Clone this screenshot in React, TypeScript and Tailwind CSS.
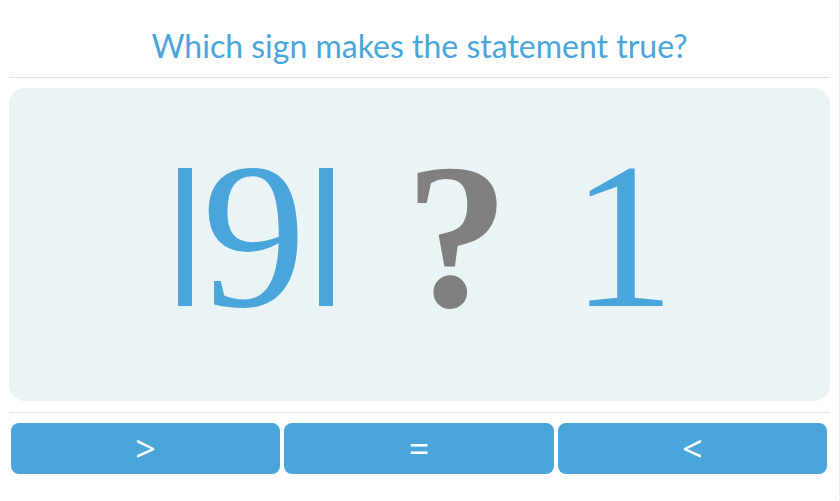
import React from 'react';

const options = ['>', '=', '<'];

export default function App() {
  return (
    <div className="w-[840px] h-[501px] bg-white border-r border-dotted border-[#e3e3e3] font-[Lato,sans-serif]">
      {/* Question */}
      <div className="h-[77px] pt-[14px] flex items-center justify-center">
        <h1 className="text-[32px] text-[#4aa6da] leading-none">Which sign makes the statement true?</h1>
      </div>
      <div className="mx-[9px] h-px bg-[#e2e2e2]" />

      {/* Statement */}
      <div className="mx-[9px] mt-[10px] h-[313px] rounded-[16px] bg-[#eaf4f7] flex items-center justify-center pb-[18px] pl-[14px]">
        <div className="flex items-baseline font-[Liberation_Serif,serif] text-[208px] leading-none">
          <span className="inline-block w-[14px] h-[138px] bg-[#4aa6da]" />
          <span className="ml-[10px] text-[#4aa6da]">9</span>
          <span className="ml-[13px] inline-block w-[14px] h-[138px] bg-[#4aa6da]" />
          <span className="ml-[72px] text-[#808080] font-bold">?</span>
          <span className="ml-[62px] text-[#4aa6da]">1</span>
        </div>
      </div>
      <div className="mx-[9px] mt-[11px] h-px bg-[#e2e2e2]" />

      {/* Answers */}
      <div className="ml-[11px] w-[816px] mt-[10px] grid grid-cols-3 gap-[4px]">
        {options.map((o) => (
          <button
            key={o}
            className="h-[51px] rounded-[8px] bg-[#4aa6da] text-white font-[Open_Sans,sans-serif] text-[36px] leading-none flex items-center justify-center"
          >
            {o}
          </button>
        ))}
      </div>
    </div>
  );
}
